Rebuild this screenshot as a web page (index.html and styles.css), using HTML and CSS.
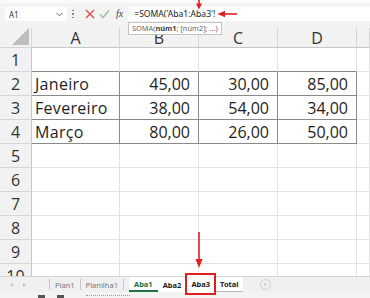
FILE: index.html
```html
<!DOCTYPE html>
<html>
<head>
    <meta charset="UTF-8">
    <title>Planilha - SOMA 3D</title>
    <link rel="stylesheet" href="styles.css">
</head>
<body>
<div class="app">

    <div class="formula-bar">
        <div class="name-box">
            <span>A1</span>
            <svg class="chevron" width="7" height="5" viewBox="0 0 7 5"><polyline points="0.5,0.8 3.5,3.8 6.5,0.8" fill="none" stroke="#666" stroke-width="1"/></svg>
        </div>
        <div class="grip"><i></i><i></i><i></i></div>
        <svg class="fb-icon" width="10" height="10" viewBox="0 0 10 10"><path d="M1 1 L9 9 M9 1 L1 9" stroke="#e04a4a" stroke-width="1.3"/></svg>
        <svg class="fb-icon" width="11" height="10" viewBox="0 0 11 10"><path d="M1 5.5 L4 8.5 L10 1.5" fill="none" stroke="#8cc08c" stroke-width="1.2"/></svg>
        <span class="fx">fx</span>
        <div class="formula-input">=SOMA('Aba1:Aba3'!</div>
    </div>

    <div class="sheet">
        <div class="corner"><span class="tri"></span></div>
        <div class="col-head">A</div>
        <div class="col-head">B</div>
        <div class="col-head">C</div>
        <div class="col-head">D</div>
        <div class="col-head last"></div>

        <div class="row-head">1</div>
        <div class="cell bt"></div><div class="cell bt"></div><div class="cell bt"></div><div class="cell bt"></div><div class="cell"></div>

        <div class="row-head">2</div>
        <div class="cell b txt">Janeiro</div><div class="cell b num">45,00</div><div class="cell b num">30,00</div><div class="cell b num">85,00</div><div class="cell"></div>

        <div class="row-head">3</div>
        <div class="cell b txt">Fevereiro</div><div class="cell b num">38,00</div><div class="cell b num">54,00</div><div class="cell b num">34,00</div><div class="cell"></div>

        <div class="row-head">4</div>
        <div class="cell b txt">Março</div><div class="cell b num">80,00</div><div class="cell b num">26,00</div><div class="cell b num">50,00</div><div class="cell"></div>

        <div class="row-head">5</div>
        <div class="cell"></div><div class="cell"></div><div class="cell"></div><div class="cell"></div><div class="cell"></div>
        <div class="row-head">6</div>
        <div class="cell"></div><div class="cell"></div><div class="cell"></div><div class="cell"></div><div class="cell"></div>
        <div class="row-head">7</div>
        <div class="cell"></div><div class="cell"></div><div class="cell"></div><div class="cell"></div><div class="cell"></div>
        <div class="row-head">8</div>
        <div class="cell"></div><div class="cell"></div><div class="cell"></div><div class="cell"></div><div class="cell"></div>
        <div class="row-head">9</div>
        <div class="cell"></div><div class="cell"></div><div class="cell"></div><div class="cell"></div><div class="cell"></div>
        <div class="row-head">10</div>
        <div class="cell"></div><div class="cell"></div><div class="cell"></div><div class="cell"></div><div class="cell"></div>
    </div>

    <div class="tab-bar">
        <div class="nav">
            <span class="nav-arrow left"></span>
            <span class="nav-arrow right"></span>
        </div>
        <div class="tab sep">Plan1</div>
        <div class="tab sep">Planilha1</div>
        <div class="tab active">Aba1</div>
        <div class="tab bold">Aba2</div>
        <div class="tab bold marked">Aba3</div>
        <div class="tab bold grouped">Total</div>
        <div class="add-sheet">+</div>
    </div>

    <div class="status-bar">
        <span class="st-icon"></span>
        <span class="st-icon"></span>
        <span class="st-dots"></span>
    </div>

    <div class="tooltip">SOMA(<b>núm1</b>; [núm2]; ...)</div>

    <svg class="marks" width="370" height="298" viewBox="0 0 370 298">
        <line x1="199" y1="0" x2="199" y2="5" stroke="#e0201e" stroke-width="1.6"/>
        <polygon points="196,3.5 202,3.5 199,9.5" fill="#e0201e"/>
        <line x1="223" y1="14" x2="237" y2="14" stroke="#e0201e" stroke-width="1.6"/>
        <polygon points="217.5,14 225,10.8 225,17.2" fill="#e0201e"/>
        <line x1="199" y1="232" x2="199" y2="261" stroke="#e0201e" stroke-width="1.6"/>
        <polygon points="195.5,259 202.5,259 199,268" fill="#e0201e"/>
    </svg>
</div>
</body>
</html>
```

FILE: styles.css
```css
body {
    margin: 0;
    background-color: white;
    font-family: "Noto Sans", "Open Sans", sans-serif;
}

.app {
    position: relative;
    width: 370px;
    height: 298px;
    overflow: hidden;
    background-color: #f3f3f3;
}

/* formula bar */
.formula-bar {
    height: 28px;
    box-sizing: border-box;
    display: flex;
    align-items: flex-start;
    border-top: 3px solid #fafafa;
    padding-top: 4px;
}

.name-box {
    width: 62px;
    height: 14px;
    margin-left: 5px;
    background-color: white;
    display: flex;
    align-items: center;
    justify-content: space-between;
    padding: 0 4px;
    box-sizing: border-box;
    font-size: 8px;
    color: #333;
}

.grip {
    width: 3px;
    margin-left: 5px;
    margin-right: 10px;
    height: 14px;
    display: flex;
    flex-direction: column;
    justify-content: center;
    gap: 2px;
}

.grip i {
    display: block;
    width: 1.5px;
    height: 1.5px;
    background-color: #888;
}

.fb-icon {
    margin-top: 2px;
    margin-right: 4px;
}

.fx {
    font-family: "Liberation Serif", serif;
    font-style: italic;
    font-size: 10px;
    color: #444;
    margin-left: 2px;
    line-height: 14px;
}

.formula-input {
    flex: 1;
    margin-left: 5px;
    height: 14px;
    background-color: white;
    font-size: 8.6px;
    line-height: 14px;
    padding-left: 6px;
    color: #222;
}

/* sheet grid */
.sheet {
    height: 248px;
    overflow: hidden;
    display: grid;
    grid-template-columns: 32px 88px 79px 79px 79px 1fr;
    grid-template-rows: 20px repeat(10, 24px);
    background-color: white;
    font-family: "Open Sans", sans-serif;
}

.corner, .col-head, .row-head {
    background-color: #f2f2f2;
    box-sizing: border-box;
    border-right: 1px solid #d6d6d6;
    border-bottom: 1px solid #d6d6d6;
    color: #333;
}

.corner {
    position: relative;
}

.tri {
    position: absolute;
    right: 2px;
    bottom: 2px;
    width: 0;
    height: 0;
    border-left: 17px solid transparent;
    border-bottom: 17px solid #bdbdbd;
}

.col-head {
    font-size: 16px;
    display: flex;
    align-items: center;
    justify-content: center;
    border-bottom-color: #c6c6c6;
}

.row-head {
    font-size: 16px;
    display: flex;
    align-items: center;
    justify-content: center;
    border-right-color: #c6c6c6;
}

.cell {
    box-sizing: border-box;
    border-right: 1px solid #e2e2e2;
    border-bottom: 1px solid #e2e2e2;
    font-size: 16px;
    color: #1e1e1e;
    display: flex;
    align-items: center;
}

.cell.bt {
    border-bottom-color: #8a8a8a;
}

.cell.b {
    border-right-color: #8a8a8a;
    border-bottom-color: #8a8a8a;
}

.txt {
    padding-left: 3px;
    letter-spacing: 0.3px;
}

.num {
    justify-content: flex-end;
    padding-right: 8px;
}

/* sheet tabs */
.tab-bar {
    height: 16px;
    display: flex;
    align-items: stretch;
    background-color: #f0f0f0;
    border-top: 1px solid #d4d4d4;
    box-sizing: border-box;
    font-size: 7.5px;
    color: #777;
}

.nav {
    width: 49px;
    display: flex;
    align-items: center;
    gap: 10px;
    padding-left: 10px;
    box-sizing: border-box;
}

.nav-arrow {
    width: 0;
    height: 0;
    border-top: 2.5px solid transparent;
    border-bottom: 2.5px solid transparent;
}

.nav-arrow.left {
    border-right: 3px solid #c4c4c4;
}

.nav-arrow.right {
    border-left: 3px solid #c4c4c4;
}

.tab {
    display: flex;
    align-items: center;
    padding: 0 5px;
}

.tab.sep {
    border-left: 1px solid #c8c8c8;
    margin: 2px 0;
}

.tab.sep + .tab.sep {
    padding-right: 5px;
    border-right: 1px solid #c8c8c8;
}

.tab.active {
    margin-left: 5px;
    background-color: white;
    color: #207245;
    font-weight: bold;
    padding: 0 5px;
    border-bottom: 2px solid #207245;
}

.tab.bold {
    background-color: white;
    color: #222;
    font-weight: bold;
}

.tab.marked {
    margin-left: 0;
    outline: 2px solid #e0201e;
    outline-offset: -1px;
    height: 20px;
    margin-top: -3px;
    padding: 0 5px;
}

.tab.grouped {
    margin-left: 1px;
    padding: 0 4px;
    border-bottom: 1px solid #b8b8b8;
}

.add-sheet {
    width: 9px;
    height: 9px;
    margin: auto 0 auto 17px;
    border: 1px solid #cfcfcf;
    border-radius: 50%;
    font-size: 7px;
    line-height: 9px;
    text-align: center;
    color: #bbb;
}

.status-bar {
    height: 6px;
    background-color: #f3f3f3;
    display: flex;
    align-items: flex-end;
    padding-left: 38px;
    gap: 12px;
}

.st-icon {
    width: 7px;
    height: 3px;
    background-color: #555;
}

.st-dots {
    width: 44px;
    height: 2px;
    margin-left: 10px;
    border-top: 1px dotted #999;
}

/* overlays */
.tooltip {
    position: absolute;
    left: 128px;
    top: 22px;
    padding: 0 3px;
    height: 11px;
    line-height: 11px;
    background-color: white;
    border: 1px solid #c3c3c3;
    font-size: 7.4px;
    color: #666;
}

.tooltip b {
    color: #444;
}

.marks {
    position: absolute;
    left: 0;
    top: 0;
    pointer-events: none;
}
```
